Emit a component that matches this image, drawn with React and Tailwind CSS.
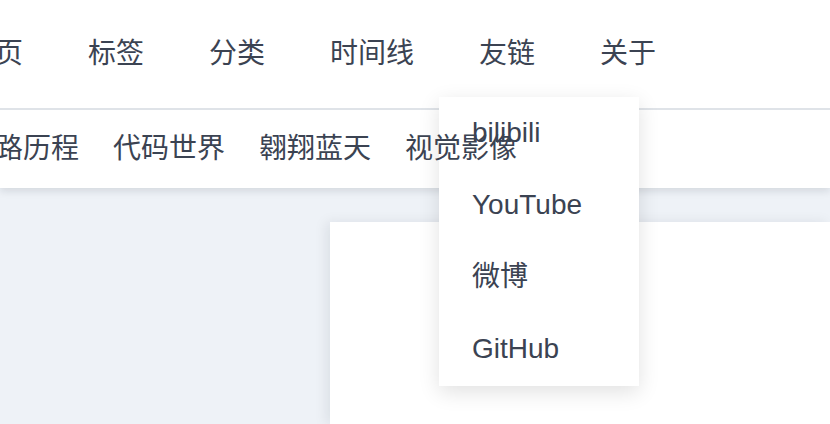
import React from "react"

const mainNav = ["首页", "标签", "分类", "时间线", "友链", "关于"]
const subNav = ["心路历程", "代码世界", "翱翔蓝天", "视觉影像"]
const links = ["bilibili", "YouTube", "微博", "GitHub"]

export default function App() {
    return (
        <div
            className="relative w-[830px] h-[424px] overflow-hidden bg-[#eef2f7] text-[#3b4352] text-[28px]"
            style={{ fontFamily: '"Liberation Sans", "Noto Sans CJK SC", sans-serif' }}
        >
            {/* Top header */}
            <header className="bg-white shadow-[0_3px_8px_rgba(15,23,42,0.12)]">
                <nav className="h-[108px] flex items-center gap-[65px] -ml-[33px]">
                    {mainNav.map((t) => (
                        <span key={t} className="leading-none whitespace-nowrap">{t}</span>
                    ))}
                </nav>
                <div className="h-[2px] bg-[#dfe3e8]" />
                <div className="h-[78px] flex items-center gap-[34px] -ml-[33px]">
                    {subNav.map((t) => (
                        <span key={t} className="relative z-20 leading-none whitespace-nowrap">{t}</span>
                    ))}
                </div>
            </header>

            {/* Content */}
            <main className="flex pl-[330px] pt-[34px] h-[236px]">
                <div className="flex-1 bg-white shadow-[-4px_0_12px_rgba(15,23,42,0.08)]" />
            </main>

            {/* Friend links dropdown */}
            <div className="absolute z-10 left-[439px] top-[97px] w-[200px] h-[289px] bg-white shadow-[0_6px_20px_rgba(0,0,0,0.12)]">
                {links.map((t) => (
                    <div key={t} className="h-[72px] flex items-center pl-[33px] leading-none">{t}</div>
                ))}
            </div>
        </div>
    )
}
